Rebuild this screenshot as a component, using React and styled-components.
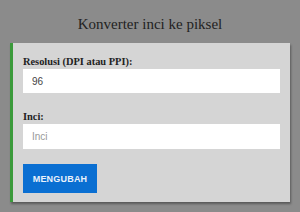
import React from "react";
import styled, { createGlobalStyle } from "styled-components";

const Global = createGlobalStyle`
  html, body { margin: 0; padding: 0; background: #8b8b8b; }
  body { width: 300px; height: 212px; overflow: hidden; }
`;

const Page = styled.div`
  padding: 16px 10px 0 10px;
`;

const Title = styled.h1`
  margin: 0 0 10px 0;
  font-family: "Liberation Serif", "Times New Roman", serif;
  font-weight: normal;
  font-size: 15px;
  line-height: 17px;
  color: #222;
  text-align: center;
`;

const Card = styled.div`
  background: #d5d5d5;
  border-left: 3px solid #3b9a3b;
  padding: 12px 10px 9px 10px;
  box-shadow: 1px 2px 2px rgba(0, 0, 0, 0.35);
`;

const Field = styled.div`
  margin-bottom: ${(p) => p.$gap}px;
`;

const Label = styled.label`
  display: block;
  font-family: "Liberation Serif", "Times New Roman", serif;
  font-weight: bold;
  font-size: 10.4px;
  line-height: 14px;
  color: #222;
`;

const Input = styled.input`
  display: block;
  box-sizing: border-box;
  width: 100%;
  height: ${(p) => p.$h}px;
  border: none;
  background: #fff;
  padding: 0 9px;
  font-family: "Liberation Sans", Arial, sans-serif;
  font-size: 10px;
  color: #444;
  outline: none;
  &::placeholder { color: #999; }
`;

const Button = styled.button`
  display: block;
  width: 74px;
  height: 29px;
  border: none;
  background: #0a6fd2;
  color: #eaf2fb;
  font-family: "Liberation Sans", Arial, sans-serif;
  font-weight: bold;
  font-size: 9px;
  letter-spacing: 0.2px;
  padding: 0;
`;

export default function App() {
  return (
    <>
      <Global />
      <Page>
        <Title>Konverter inci ke piksel</Title>
        <Card>
          <Field $gap={17}>
            <Label>Resolusi (DPI atau PPI):</Label>
            <Input $h={24} defaultValue="96" />
          </Field>
          <Field $gap={15}>
            <Label>Inci:</Label>
            <Input $h={25} placeholder="Inci" />
          </Field>
          <Button>MENGUBAH</Button>
        </Card>
      </Page>
    </>
  );
}
